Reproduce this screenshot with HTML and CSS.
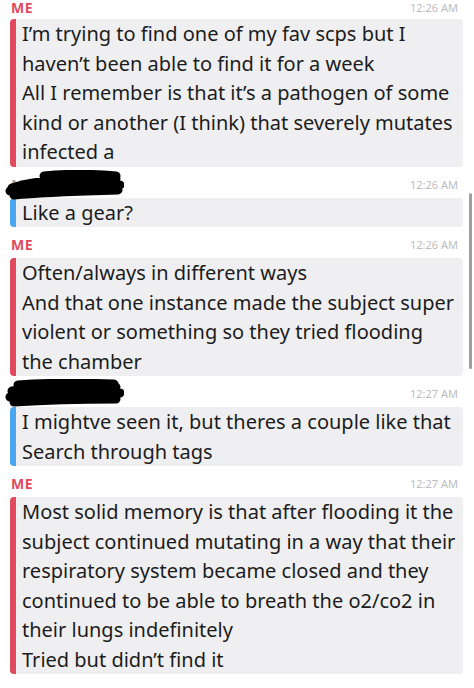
FILE: index.html
```html
<!DOCTYPE html>
<html lang="en">
<head>
  <meta charset="UTF-8" />
  <meta name="viewport" content="width=device-width, initial-scale=1.0"/>
  <title>Chat</title>
  <link rel="stylesheet" href="styles.css">
</head>
<body>
  <div class="chat">
    <div class="msg me first">
      <div class="head"><span class="name">ME</span><span class="time">12:26 AM</span></div>
      <div class="bubble">I’m trying to find one of my fav scps but I<br>haven’t been able to find it for a week<br>All I remember is that it’s a pathogen of some<br>kind or another (I think) that severely mutates<br>infected a</div>
    </div>

    <div class="msg them">
      <div class="head">
        <span class="name">M</span><span class="time">12:26 AM</span>
        <svg class="scribble" viewBox="0 0 120 30" width="120" height="30">
          <path d="M8 18 C 30 10, 70 9, 112 9 M6 21 C 40 17, 80 16, 116 15 M10 25 C 40 22, 80 21, 114 20 M40 6 C 60 4, 90 4, 112 6" stroke="#000" stroke-width="9" stroke-linecap="round" fill="none"/>
        </svg>
      </div>
      <div class="bubble">Like a gear?</div>
    </div>

    <div class="msg me">
      <div class="head"><span class="name">ME</span><span class="time">12:26 AM</span></div>
      <div class="bubble">Often/always in different ways<br>And that one instance made the subject super<br>violent or something so they tried flooding<br>the chamber</div>
    </div>

    <div class="msg them">
      <div class="head">
        <span class="name">M</span><span class="time">12:27 AM</span>
        <svg class="scribble" viewBox="0 0 120 30" width="120" height="30">
          <path d="M8 12 C 30 8, 70 7, 112 8 M6 18 C 40 15, 80 14, 116 14 M10 23 C 40 21, 80 20, 112 20 M14 6 C 40 4, 80 4, 110 5" stroke="#000" stroke-width="9" stroke-linecap="round" fill="none"/>
        </svg>
      </div>
      <div class="bubble">I mightve seen it, but theres a couple like that<br>Search through tags</div>
    </div>

    <div class="msg me">
      <div class="head"><span class="name">ME</span><span class="time">12:27 AM</span></div>
      <div class="bubble">Most solid memory is that after flooding it the<br>subject continued mutating in a way that their<br>respiratory system became closed and they<br>continued to be able to breath the o2/co2 in<br>their lungs indefinitely<br>Tried but didn’t find it</div>
    </div>

    <div class="scrollbar"></div>
  </div>
</body>
</html>
```

FILE: styles.css
```css
body {
  margin: 0;
  background: #fff;
  font-family: 'Noto Sans', 'Lato', sans-serif;
  overflow: hidden;
}

.chat {
  position: relative;
  padding: 0 11px 0 10px;
}

.msg {
  margin-top: 7px;
}

.msg.first {
  margin-top: -3px;
}

.first .head {
  margin-bottom: 6px;
}

.head {
  position: relative;
  display: flex;
  justify-content: space-between;
  align-items: flex-end;
  height: 16px;
  padding: 0 5px 0 1px;
  margin-bottom: 8px;
}

.name {
  font-size: 14px;
  font-weight: 700;
  letter-spacing: 0.5px;
  line-height: 11px;
}

.me .name {
  color: #e04a5e;
}

.them .name {
  color: #aaa;
}

.time {
  font-size: 11px;
  line-height: 10px;
  color: #bcbcbf;
}

.scribble {
  position: absolute;
  left: -6px;
  top: -4px;
}

.bubble {
  background: #efeff1;
  border-radius: 4px;
  border-left: 6px solid #e04a5e;
  padding: 0 4px 0 6px;
  font-size: 20px;
  line-height: 29.5px;
  color: #1c1c1c;
  white-space: nowrap;
}

.them .bubble {
  border-left-color: #4aa6ef;
}

.scrollbar {
  position: absolute;
  right: 2px;
  top: 196px;
  width: 3px;
  height: 176px;
  border-radius: 2px;
  background: #9e9e9e;
}
```
